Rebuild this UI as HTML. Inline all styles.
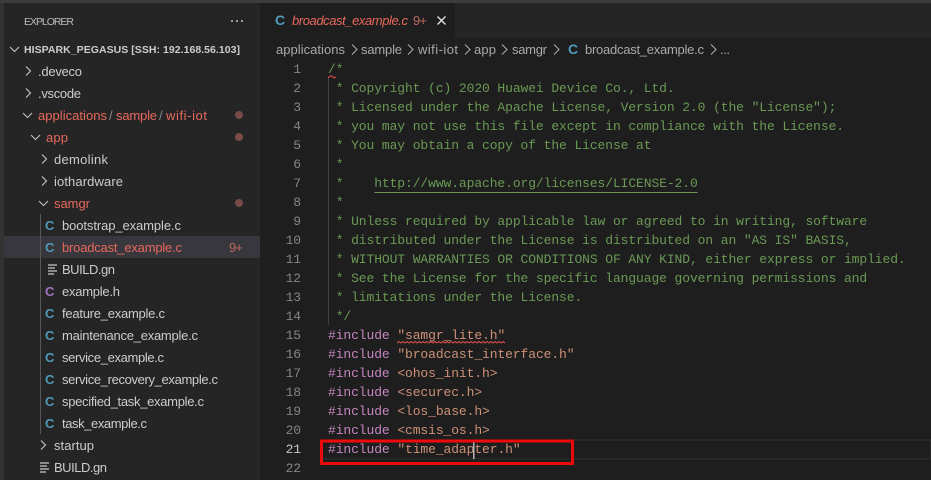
<!DOCTYPE html>
<html><head><meta charset="utf-8"><style>
html,body{margin:0;padding:0;width:931px;height:480px;overflow:hidden;background:#1e1e1e}
svg{display:block}
.s{font:13px "Liberation Sans",sans-serif;fill:#cccccc}
.r{fill:#e8695c}
.m{font:13px "Liberation Mono",monospace;letter-spacing:-.1px;white-space:pre}
.c{fill:#6a9955}.i{fill:#c586c0}.t{fill:#ce9178}
.n{font:13px "Liberation Mono",monospace;letter-spacing:-.1px;fill:#858585;text-anchor:end}
.ic{font:bold 13px "Liberation Sans",sans-serif;fill:#519aba}
.ib{font:bold 14px "Liberation Sans",sans-serif;fill:#519aba}
.b{font:13px "Liberation Sans",sans-serif;fill:#a9a9a9}
.ch{fill:none;stroke:#c5c5c5;stroke-width:1.1}
</style></head><body>
<svg width="931" height="480" viewBox="0 0 931 480" xmlns="http://www.w3.org/2000/svg">
<rect width="931" height="480" fill="#1e1e1e"/>
<rect width="4" height="480" fill="#333333"/>
<rect x="4" y="3" width="256" height="477" fill="#252526"/>
<rect x="260" y="3" width="671" height="35" fill="#252526"/>
<rect x="260" y="3" width="195" height="35" fill="#1e1e1e"/>
<rect width="931" height="3" fill="#3c3c3c"/>

<!-- explorer header -->
<text x="24" y="25" font-family="Liberation Sans" font-size="10.500" fill="#bbbbbb" textLength="50" lengthAdjust="spacing">EXPLORER</text>
<circle cx="232" cy="21" r="1" fill="#c5c5c5"/><circle cx="237" cy="21" r="1" fill="#c5c5c5"/><circle cx="242" cy="21" r="1" fill="#c5c5c5"/>

<!-- tree rows -->
<text x="24" y="53" font-family="Liberation Sans" font-size="10.500" font-weight="bold" fill="#cccccc" textLength="216" lengthAdjust="spacing">HISPARK_PEGASUS [SSH: 192.168.56.103]</text>
<path class="ch" d="M10 47l4.500 4.500l4.500-4.500"/>

<path class="ch" d="M26 66.500l4.500 4.500l-4.500 4.500"/>
<text class="s" x="38" y="76" textLength="44" lengthAdjust="spacing">.deveco</text>
<path class="ch" d="M26 88.500l4.500 4.500l-4.500 4.500"/>
<text class="s" x="38" y="98" textLength="43" lengthAdjust="spacing">.vscode</text>

<path class="ch" d="M23 113l4.500 4.500l4.500-4.500"/>
<text class="s r" x="38" y="120" textLength="69" lengthAdjust="spacing">applications</text>
<text class="s" x="109" y="120" style="fill:#8a8a8a">/</text>
<text class="s r" x="116" y="120" textLength="41" lengthAdjust="spacing">sample</text>
<text class="s" x="159" y="120" style="fill:#8a8a8a">/</text>
<text class="s r" x="166" y="120" textLength="41" lengthAdjust="spacing">wifi-iot</text>
<circle cx="239" cy="115" r="4" fill="#7a4c47"/>

<path class="ch" d="M31 135l4.500 4.500l4.500-4.500"/>
<text class="s r" x="46" y="142" textLength="22" lengthAdjust="spacing">app</text>
<circle cx="239" cy="137" r="4" fill="#7a4c47"/>

<path class="ch" d="M42 154.500l4.500 4.500l-4.500 4.500"/>
<text class="s" x="54" y="164" textLength="54" lengthAdjust="spacing">demolink</text>
<path class="ch" d="M42 176.500l4.500 4.500l-4.500 4.500"/>
<text class="s" x="54" y="186" textLength="69" lengthAdjust="spacing">iothardware</text>
<path class="ch" d="M39 201l4.500 4.500l4.500-4.500"/>
<text class="s r" x="54" y="208" textLength="36" lengthAdjust="spacing">samgr</text>
<circle cx="239" cy="203" r="4" fill="#7a4c47"/>

<rect x="4" y="236" width="256" height="22" fill="#37373d"/>
<rect x="40" y="214" width="1" height="220" fill="#585858"/>

<text class="ic" x="45" y="230">C</text>
<text class="s" x="62" y="230" textLength="119" lengthAdjust="spacing">bootstrap_example.c</text>
<text class="ic" x="45" y="252">C</text>
<text class="s r" x="62" y="252" textLength="120" lengthAdjust="spacing">broadcast_example.c</text>
<text class="s" x="229" y="252" style="fill:#bd6a60" textLength="14" lengthAdjust="spacing">9+</text>
<path d="M48 265h9M48 268h7M48 271h9M48 274h6" stroke="#c8c8c8" stroke-width="1.300" fill="none"/>
<text class="s" x="62" y="274" textLength="53" lengthAdjust="spacing">BUILD.gn</text>
<text class="ic" x="45" y="296" style="fill:#a074c4">C</text>
<text class="s" x="62" y="296" textLength="58" lengthAdjust="spacing">example.h</text>
<text class="ic" x="45" y="318">C</text>
<text class="s" x="62" y="318" textLength="103" lengthAdjust="spacing">feature_example.c</text>
<text class="ic" x="45" y="340">C</text>
<text class="s" x="62" y="340" textLength="136" lengthAdjust="spacing">maintenance_example.c</text>
<text class="ic" x="45" y="362">C</text>
<text class="s" x="62" y="362" textLength="102" lengthAdjust="spacing">service_example.c</text>
<text class="ic" x="45" y="384">C</text>
<text class="s" x="62" y="384" textLength="156" lengthAdjust="spacing">service_recovery_example.c</text>
<text class="ic" x="45" y="406">C</text>
<text class="s" x="62" y="406" textLength="142" lengthAdjust="spacing">specified_task_example.c</text>
<text class="ic" x="45" y="428">C</text>
<text class="s" x="62" y="428" textLength="85" lengthAdjust="spacing">task_example.c</text>
<path class="ch" d="M41 440.500l4.500 4.500l-4.500 4.500"/>
<text class="s" x="54" y="450" textLength="40" lengthAdjust="spacing">startup</text>
<path d="M40 463h9M40 466h7M40 469h9M40 472h6" stroke="#c8c8c8" stroke-width="1.300" fill="none"/>
<text class="s" x="54" y="472" textLength="53" lengthAdjust="spacing">BUILD.gn</text>

<!-- tab -->
<text class="ib" x="275" y="25">C</text>
<text x="292" y="25" font-family="Liberation Sans" font-size="13" font-style="italic" fill="#e8695c" textLength="116" lengthAdjust="spacing">broadcast_example.c</text>
<text x="413" y="25" font-family="Liberation Sans" font-size="13" fill="#bd6a60" textLength="14" lengthAdjust="spacing">9+</text>
<path d="M437.500 16.500l8 8M445.500 16.500l-8 8" stroke="#e6e6e6" stroke-width="1.300" fill="none"/>

<!-- breadcrumbs -->
<text class="b" x="276" y="54" textLength="69" lengthAdjust="spacing">applications</text>
<text class="b" x="361" y="54" textLength="41" lengthAdjust="spacing">sample</text>
<text class="b" x="418" y="54" textLength="40" lengthAdjust="spacing">wifi-iot</text>
<text class="b" x="474" y="54" textLength="22" lengthAdjust="spacing">app</text>
<text class="b" x="512" y="54" textLength="35" lengthAdjust="spacing">samgr</text>
<text class="b" x="585" y="54" textLength="119" lengthAdjust="spacing">broadcast_example.c</text>
<text class="b" x="720" y="54" textLength="10" lengthAdjust="spacing">...</text>
<path d="M352 44.500l5 5l-5 5M408 44.500l5 5l-5 5M465 44.500l5 5l-5 5M502 44.500l5 5l-5 5M554 44.500l5 5l-5 5M711 44.500l5 5l-5 5" fill="none" stroke="#a9a9a9" stroke-width="1.100"/>
<text class="ib" x="568" y="54">C</text>

<!-- current line -->
<rect x="321" y="440" width="610" height="19" fill="none" stroke="#303030" stroke-width="1"/>

<!-- guide -->
<rect x="328" y="78" width="1" height="247" fill="#404040"/>

<!-- line numbers -->
<text class="n" x="301" y="73">1</text><text class="n" x="301" y="92">2</text><text class="n" x="301" y="111">3</text><text class="n" x="301" y="130">4</text><text class="n" x="301" y="149">5</text><text class="n" x="301" y="168">6</text><text class="n" x="301" y="187">7</text><text class="n" x="301" y="206">8</text><text class="n" x="301" y="225">9</text><text class="n" x="301" y="244">10</text><text class="n" x="301" y="263">11</text><text class="n" x="301" y="282">12</text><text class="n" x="301" y="301">13</text><text class="n" x="301" y="320">14</text><text class="n" x="301" y="339">15</text><text class="n" x="301" y="358">16</text><text class="n" x="301" y="377">17</text><text class="n" x="301" y="396">18</text><text class="n" x="301" y="415">19</text><text class="n" x="301" y="434">20</text><text class="n" x="301" y="453" style="fill:#c6c6c6">21</text><text class="n" x="301" y="472">22</text>

<!-- code -->
<text class="m c" x="328" y="73">/*</text>
<text class="m c" x="328" y="92"> * Copyright (c) 2020 Huawei Device Co., Ltd.</text>
<text class="m c" x="328" y="111"> * Licensed under the Apache License, Version 2.0 (the "License");</text>
<text class="m c" x="328" y="130"> * you may not use this file except in compliance with the License.</text>
<text class="m c" x="328" y="149"> * You may obtain a copy of the License at</text>
<text class="m c" x="328" y="168"> *</text>
<text class="m c" x="328" y="187"> *    http://www.apache.org/licenses/LICENSE-2.0</text>
<rect x="374.500" y="192" width="323" height="1" fill="#6a9955"/>
<text class="m c" x="328" y="206"> *</text>
<text class="m c" x="328" y="225"> * Unless required by applicable law or agreed to in writing, software</text>
<text class="m c" x="328" y="244"> * distributed under the License is distributed on an "AS IS" BASIS,</text>
<text class="m c" x="328" y="263"> * WITHOUT WARRANTIES OR CONDITIONS OF ANY KIND, either express or implied.</text>
<text class="m c" x="328" y="282"> * See the License for the specific language governing permissions and</text>
<text class="m c" x="328" y="301"> * limitations under the License.</text>
<text class="m c" x="328" y="320"> */</text>
<text class="m" x="328" y="339"><tspan class="i">#include</tspan><tspan class="t"> "samgr_lite.h"</tspan></text>
<text class="m" x="328" y="358"><tspan class="i">#include</tspan><tspan class="t"> "broadcast_interface.h"</tspan></text>
<text class="m" x="328" y="377"><tspan class="i">#include</tspan><tspan class="t"> &lt;ohos_init.h&gt;</tspan></text>
<text class="m" x="328" y="396"><tspan class="i">#include</tspan><tspan class="t"> &lt;securec.h&gt;</tspan></text>
<text class="m" x="328" y="415"><tspan class="i">#include</tspan><tspan class="t"> &lt;los_base.h&gt;</tspan></text>
<text class="m" x="328" y="434"><tspan class="i">#include</tspan><tspan class="t"> &lt;cmsis_os.h&gt;</tspan></text>
<text class="m" x="328" y="453"><tspan class="i">#include</tspan><tspan class="t"> "time_adapter.h"</tspan></text>

<!-- squiggles -->
<path d="M328 78l2-2l2 0l2 2l2-1" fill="none" stroke="#e2504a" stroke-width="1"/>
<path d="M397 343l2-1.500l2 1.500l2-1.500l2 1.500l2-1.500l2 1.500l2-1.500l2 1.500l2-1.500l2 1.500l2-1.500l2 1.500l2-1.500l2 1.500l2-1.500l2 1.500l2-1.500l2 1.500l2-1.500l2 1.500l2-1.500l2 1.500l2-1.500l2 1.500l2-1.500l2 1.500l2-1.500l2 1.500l2-1.500l2 1.500l2-1.500l2 1.500l2-1.500l2 1.500l2-1.500l2 1.500l2-1.500l2 1.500l2-1.500l2 1.500l2-1.500l2 1.500l2-1.500l2 1.500l2-1.500l2 1.500l2-1.500l2 1.500l2-1.500l2 1.500l2-1.500l2 1.500l2-1.500l2 1.500" fill="none" stroke="#e2504a" stroke-width="1"/>

<!-- cursor -->
<rect x="473" y="440" width="1.500" height="19" fill="#b4b4b4"/>

<!-- red box -->
<rect x="321.500" y="441" width="251" height="22.500" fill="none" stroke="#ee0a0a" stroke-width="3"/>
</svg>
</body></html>
